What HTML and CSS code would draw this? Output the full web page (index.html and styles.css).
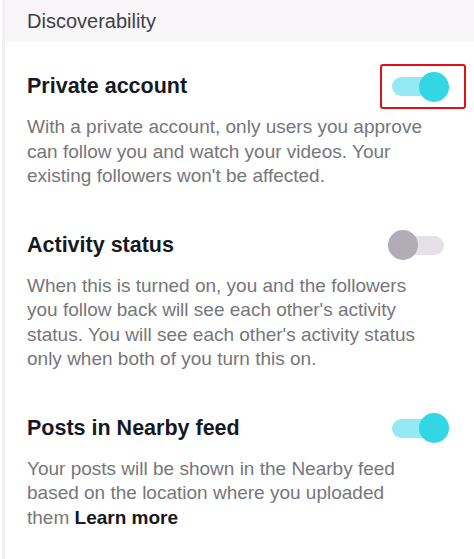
FILE: index.html
```html
<!DOCTYPE html>
<html>
<head>
<meta charset="utf-8">
<link rel="stylesheet" href="styles.css">
</head>
<body>
<div class="screen">
  <div class="section-head">Discoverability</div>
  <div class="item first">
    <div class="row">
      <div class="title">Private account</div>
      <div class="toggle-box highlight">
        <div class="toggle on"><span class="knob"></span></div>
      </div>
    </div>
    <p class="desc">With a private account, only users you approve<br>can follow you and watch your videos. Your<br>existing followers won't be affected.</p>
  </div>
  <div class="item">
    <div class="row">
      <div class="title">Activity status</div>
      <div class="toggle-box">
        <div class="toggle off"><span class="knob"></span></div>
      </div>
    </div>
    <p class="desc">When this is turned on, you and the followers<br>you follow back will see each other's activity<br>status. You will see each other's activity status<br>only when both of you turn this on.</p>
  </div>
  <div class="item">
    <div class="row">
      <div class="title">Posts in Nearby feed</div>
      <div class="toggle-box">
        <div class="toggle on"><span class="knob"></span></div>
      </div>
    </div>
    <p class="desc">Your posts will be shown in the Nearby feed<br>based on the location where you uploaded<br>them <b class="link">Learn more</b></p>
  </div>
</div>
</body>
</html>
```
FILE: styles.css
```css
html, body {
  margin: 0;
  padding: 0;
  background: #ffffff;
}
body {
  font-family: "Liberation Sans", Arial, sans-serif;
  width: 474px;
  height: 559px;
  overflow: hidden;
}
.screen {
  border-left: 3px solid #f1eff1;
  margin-left: 2px;
  min-height: 559px;
}
.section-head {
  background: #f8f6f8;
  height: 42px;
  display: flex;
  align-items: center;
  padding-left: 22px;
  font-size: 20px;
  color: #404048;
}
.item {
  padding: 0 8px 0 22px;
}
.item.first { padding-top: 22px; }
.item + .item { padding-top: 34px; }
.row {
  display: flex;
  align-items: center;
  justify-content: space-between;
  height: 45px;
}
.title {
  font-size: 21.5px;
  font-weight: 700;
  color: #161823;
}
.toggle-box {
  width: 82px;
  height: 41px;
  border: 2px solid transparent;
  border-radius: 3px;
  display: flex;
  align-items: center;
  justify-content: center;
}
.toggle-box.highlight { border-color: #e3101a; }
.toggle {
  position: relative;
  width: 52px;
  height: 19px;
  border-radius: 10px;
  margin-right: 10px;
}
.toggle.on { background: #94e9f3; }
.toggle.off { background: #e6e1e9; }
.knob {
  position: absolute;
  top: 50%;
  width: 30px;
  height: 30px;
  margin-top: -15px;
  border-radius: 50%;
}
.toggle.on .knob { right: -5px; background: #33d6e4; }
.toggle.off .knob { left: -4px; background: #b1acb5; }
.desc {
  margin: 6px 0 0 0;
  font-size: 19px;
  line-height: 24.5px;
  color: #76767b;
  white-space: nowrap;
}
.link {
  color: #161823;
  font-weight: 700;
}
```
